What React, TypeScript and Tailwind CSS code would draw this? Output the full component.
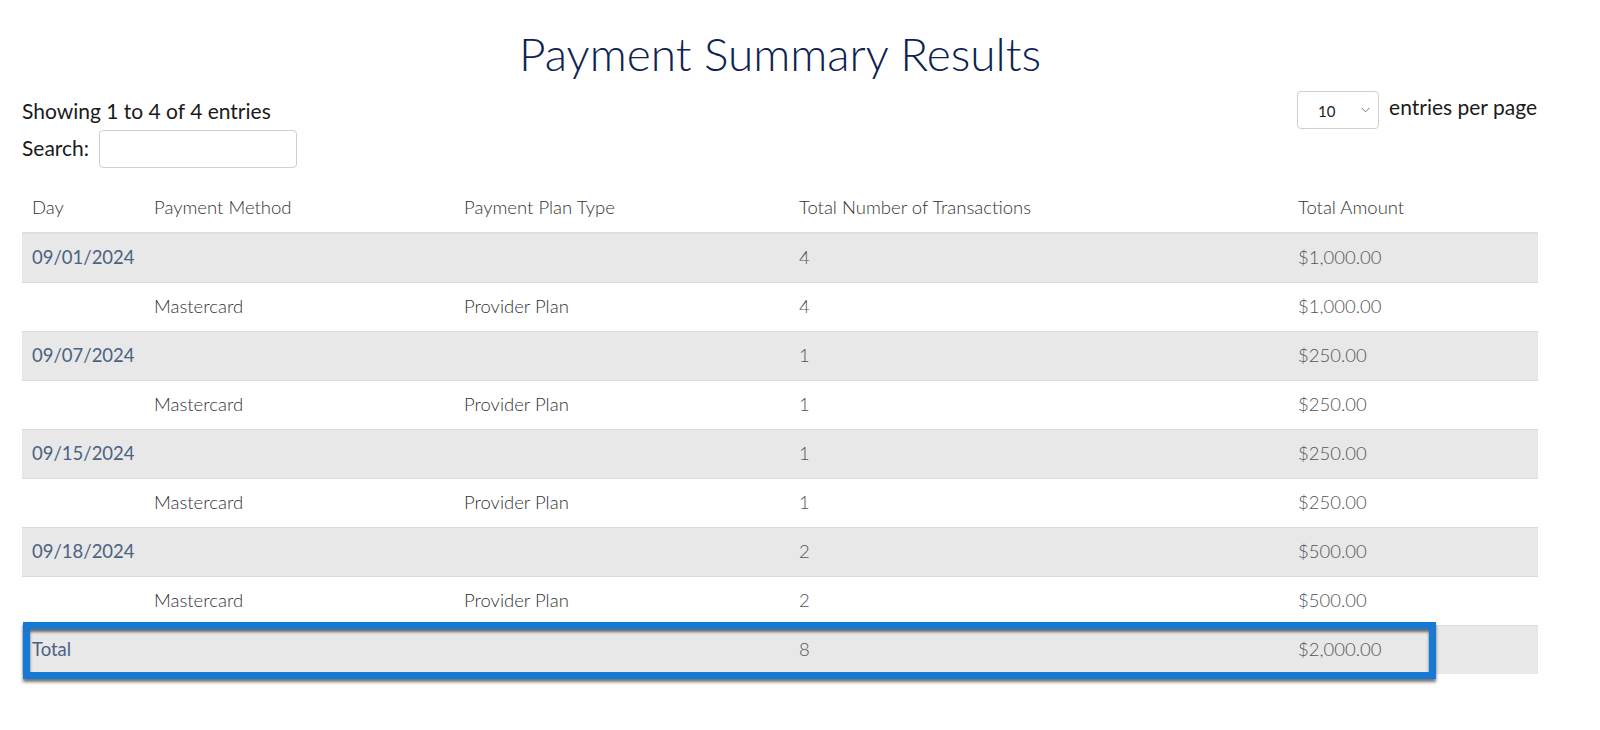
import React from "react";

type Row = { day?: string; method?: string; plan?: string; count: string; amount: string; group: boolean };

const rows: Row[] = [
  { day: "09/01/2024", count: "4", amount: "$1,000.00", group: true },
  { method: "Mastercard", plan: "Provider Plan", count: "4", amount: "$1,000.00", group: false },
  { day: "09/07/2024", count: "1", amount: "$250.00", group: true },
  { method: "Mastercard", plan: "Provider Plan", count: "1", amount: "$250.00", group: false },
  { day: "09/15/2024", count: "1", amount: "$250.00", group: true },
  { method: "Mastercard", plan: "Provider Plan", count: "1", amount: "$250.00", group: false },
  { day: "09/18/2024", count: "2", amount: "$500.00", group: true },
  { method: "Mastercard", plan: "Provider Plan", count: "2", amount: "$500.00", group: false },
];

export default function App() {
  return (
    <div className="w-[1600px] h-[730px] bg-white font-['Lato',sans-serif] overflow-hidden">
      <div className="pl-[22px] pr-[62px]">
        <h1 className="pt-[26px] h-[90px] text-center text-[46px] leading-[56px] font-light text-[#0e2352]">
          Payment Summary Results
        </h1>
        <div className="flex justify-between">
          <div className="flex flex-col">
            <div className="text-[21px] leading-[26px] text-[#1a1a1a] h-[41px] pt-[9px] -mt-[1px]">Showing 1 to 4 of 4 entries</div>
            <div className="flex items-center gap-[10px] text-[21px] text-[#1a1a1a]">
              <span className="-mt-[2px]">Search:</span>
              <input className="w-[198px] h-[38px] border border-[#cfcfcf] rounded-[4px] outline-none" />
            </div>
          </div>
          <div className="flex items-center gap-[10px] h-[38px] mt-[1px] mr-[1px]">
            <div className="relative w-[82px] h-[38px] border border-[#cfcfcf] rounded-[4px] flex items-center">
              <span className="pl-[20px] text-[15px] text-[#222] pt-[2px]">10</span>
              <svg className="absolute right-[8px] top-[15px]" width="9" height="6" viewBox="0 0 9 6" fill="none">
                <path d="M0.5 0.8 L4.5 4.8 L8.5 0.8" stroke="#777" strokeWidth="1" />
              </svg>
            </div>
            <span className="text-[21px] text-[#1a1a1a] -mt-[6px]">entries per page</span>
          </div>
        </div>
        <div className="relative mt-[15px]">
          <table className="w-[1516px] table-fixed border-collapse">
            <colgroup>
              <col className="w-[122px]" />
              <col className="w-[310px]" />
              <col className="w-[335px]" />
              <col className="w-[499px]" />
              <col className="w-[250px]" />
            </colgroup>
            <thead>
              <tr className="h-[50px] border-b-2 border-[#dedede] text-left text-[18.5px] font-light text-[#333]">
                <th className="font-light pl-[10px]">Day</th>
                <th className="font-light pl-[10px]">Payment Method</th>
                <th className="font-light pl-[10px]">Payment Plan Type</th>
                <th className="font-light pl-[10px]">Total Number of Transactions</th>
                <th className="font-light pl-[10px]">Total Amount</th>
              </tr>
            </thead>
            <tbody>
              {rows.map((r, i) => (
                <tr
                  key={i}
                  className={`h-[49px] border-t border-[#dcdcdc] text-[18.5px] ${r.group ? "bg-[#e8e8e8]" : "bg-white"}`}
                >
                  <td className="pl-[10px] text-[#4b6282]">{r.day ?? ""}</td>
                  <td className="pl-[10px] font-light text-[#333]">{r.method ?? ""}</td>
                  <td className="pl-[10px] font-light text-[#333]">{r.plan ?? ""}</td>
                  <td className="pl-[10px] font-light text-[#555]">{r.count}</td>
                  <td className="pl-[10px] font-light text-[#555]">{r.amount}</td>
                </tr>
              ))}
              <tr className="h-[49px] border-t border-[#dcdcdc] text-[18.5px] bg-[#e8e8e8]">
                <td className="pl-[10px] text-[#4b6282]">Total</td>
                <td></td>
                <td></td>
                <td className="pl-[10px] font-light text-[#555]">8</td>
                <td className="pl-[10px] font-light text-[#555]">$2,000.00</td>
              </tr>
            </tbody>
          </table>
          <div className="absolute left-[1px] bottom-[-5px] w-[1413px] h-[57px] border-[7px] border-[#1679d3] shadow-[0_3px_3px_rgba(0,0,0,0.55),inset_0_3px_3px_rgba(0,0,0,0.55)] pointer-events-none" />
        </div>
      </div>
    </div>
  );
}
